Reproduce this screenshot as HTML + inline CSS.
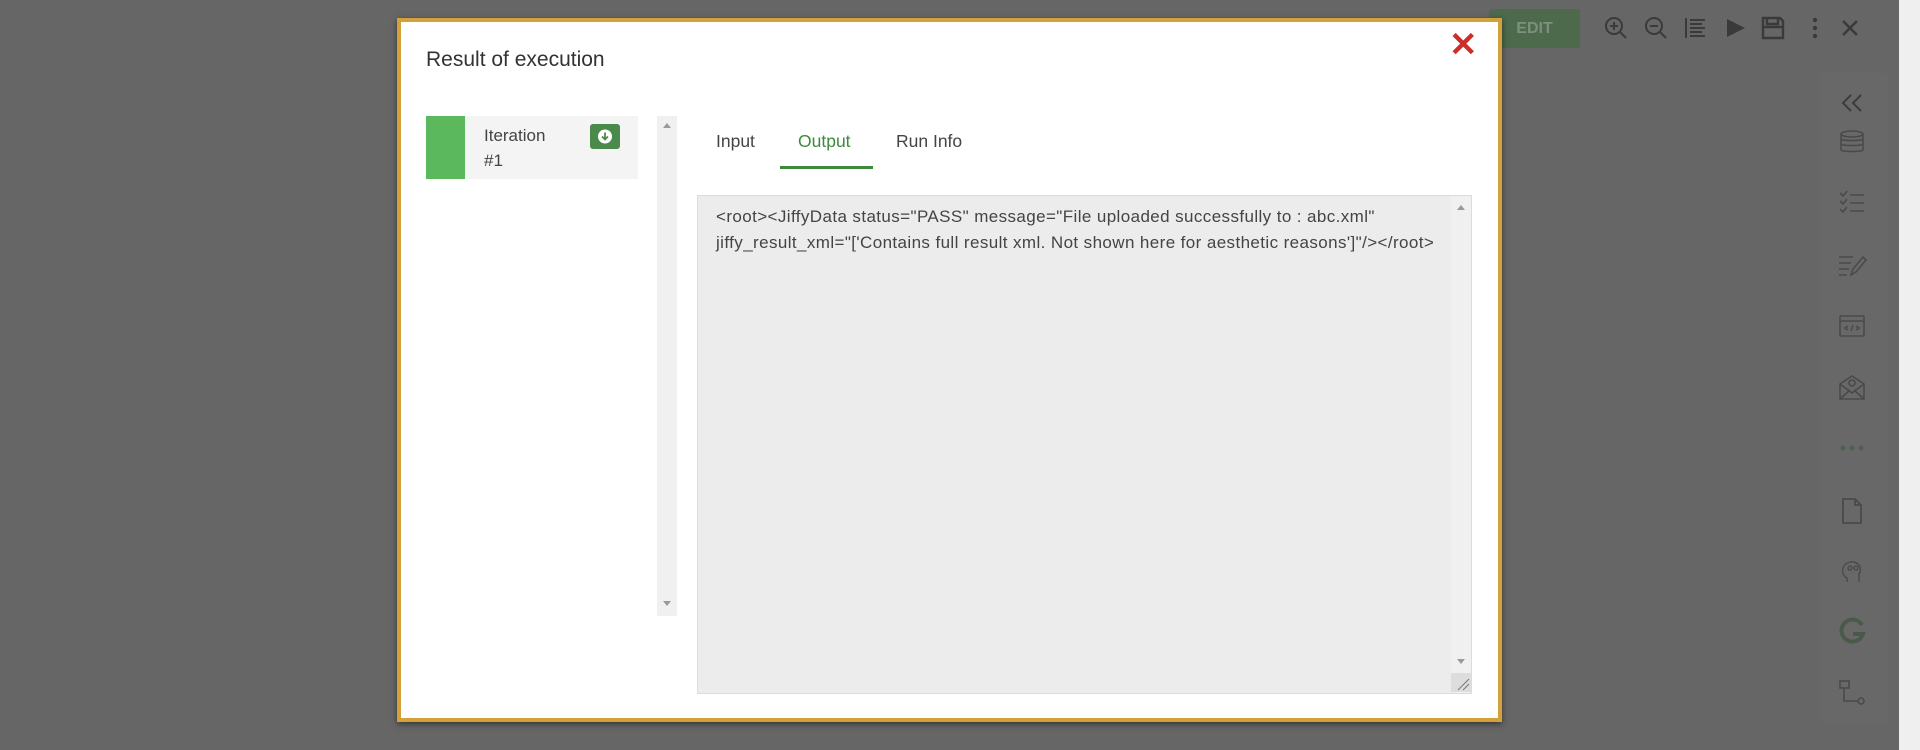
<!DOCTYPE html>
<html><head><style>
body{margin:0;width:1920px;height:750px;background:#666;position:relative;overflow:hidden;font-family:"Liberation Sans",sans-serif}
.a{position:absolute}
.strip{left:1899px;top:0;width:21px;height:750px;background:#efefef}
.edit{left:1489px;top:9px;width:91px;height:39px;background:#4d6a4d;border-radius:3px;color:#7d907d;font-weight:bold;font-size:16px;line-height:39px;text-align:center}
.tb{top:15px;width:26px;height:26px}
.side{left:1820px;top:73px;width:68px;height:650px;background:#686868;border-radius:4px}
.si{left:1837px;width:30px;height:30px}
.modal{left:397px;top:18px;width:1097px;height:696px;background:#fff;border:4px solid #d4a03a;box-shadow:0 2px 6px rgba(0,0,0,.5)}
.title{left:426px;top:48px;font-size:21px;color:#333}
.close{left:1449px;top:28px;color:#c9302c;font-size:34px;font-weight:bold;line-height:34px}
.item{left:426px;top:116px;width:212px;height:63px;background:#f4f4f4}
.bar{left:426px;top:116px;width:39px;height:63px;background:#5cb85c}
.itxt{left:484px;top:123px;font-size:17px;color:#444;line-height:25px}
.dl{left:590px;top:124px;width:30px;height:25px;background:#4a8a4a;border-radius:3px}
.sc{left:657px;top:116px;width:20px;height:500px;background:#f0f0f0}
.tab{top:131px;font-size:17.5px;color:#444}
.tx{left:697px;top:195px;width:773px;height:497px;background:#ececec;border:1px solid #dcdcdc}
.txt{left:716px;top:204px;font-size:17px;color:#444;line-height:26px;white-space:nowrap;letter-spacing:0.4px}
</style></head><body>
<div class="a strip"></div>
<div class="a edit">EDIT</div>
<svg class="a tb" style="left:1603px" viewBox="0 0 26 26" fill="none" stroke="#3a3a3a" stroke-width="2"><circle cx="11" cy="11" r="8"/><path d="M17 17l6 6M11 7v8M7 11h8"/></svg>
<svg class="a tb" style="left:1643px" viewBox="0 0 26 26" fill="none" stroke="#3a3a3a" stroke-width="2"><circle cx="11" cy="11" r="8"/><path d="M17 17l6 6M7 11h8"/></svg>
<svg class="a tb" style="left:1683px" viewBox="0 0 26 26" fill="none" stroke="#3a3a3a" stroke-width="2"><path d="M3 3v20M7 5h15M7 9h12M7 13h15M7 17h12M7 21h15"/></svg>
<svg class="a tb" style="left:1722px" viewBox="0 0 26 26"><path d="M5 4l18 9-18 9z" fill="#3a3a3a"/></svg>
<svg class="a tb" style="left:1760px" viewBox="0 0 26 26" fill="none" stroke="#3a3a3a" stroke-width="2.4"><path d="M3 3h17l3 3v17H3z M7 3v6h11V3 M3 12h20"/></svg>
<svg class="a tb" style="left:1802px" viewBox="0 0 26 26" fill="#3a3a3a"><circle cx="13" cy="5" r="2.2"/><circle cx="13" cy="13" r="2.2"/><circle cx="13" cy="21" r="2.2"/></svg>
<svg class="a tb" style="left:1837px" viewBox="0 0 26 26" stroke="#3a3a3a" stroke-width="2.6"><path d="M6 6l14 14M20 6L6 20"/></svg>
<div class="a side"></div>
<svg class="a si" style="top:88px" viewBox="0 0 30 30" fill="none" stroke="#3d3d3d" stroke-width="2"><path d="M14 7l-8 8 8 8M24 7l-8 8 8 8"/></svg>
<svg class="a si" style="top:127px" viewBox="0 0 30 30" fill="none" stroke="#4a4a4a" stroke-width="1.6"><ellipse cx="15" cy="7" rx="11" ry="3"/><path d="M4 7v16c0 2 22 2 22 0V7M4 12c0 2 22 2 22 0M4 17c0 2 22 2 22 0"/></svg>
<svg class="a si" style="top:187px" viewBox="0 0 30 30" fill="none" stroke="#4a4a4a" stroke-width="1.6"><path d="M3 6l3 3 4-5M3 14l3 3 4-5M3 22l3 3 4-5M13 8h14M13 16h14M13 24h14"/></svg>
<svg class="a si" style="top:249px" viewBox="0 0 30 30" fill="none" stroke="#4a4a4a" stroke-width="1.6"><path d="M2 8h14M2 14h12M2 20h10M2 26h8M14 26l2-6 10-12 3 3-10 12z"/></svg>
<svg class="a si" style="top:311px" viewBox="0 0 30 30" fill="none" stroke="#4a4a4a" stroke-width="1.6"><rect x="3" y="5" width="24" height="20" rx="1"/><path d="M3 10h24M11 15l-3 2 3 2M19 15l3 2-3 2M16 14l-2 6"/></svg>
<svg class="a si" style="top:372px" viewBox="0 0 30 30" fill="none" stroke="#4a4a4a" stroke-width="1.6"><path d="M3 12v15h24V12L15 4zM3 27l10-9M27 27l-10-9M3 12l12 9 12-9"/><circle cx="15" cy="11" r="3"/></svg>
<svg class="a si" style="top:433px" viewBox="0 0 30 30" fill="#4f5f4f"><circle cx="6" cy="15" r="2.5"/><circle cx="15" cy="15" r="2.5"/><circle cx="24" cy="15" r="2.5"/></svg>
<svg class="a si" style="top:496px" viewBox="0 0 30 30" fill="none" stroke="#4a4a4a" stroke-width="1.8"><path d="M6 3h12l6 6v18H6zM18 3v6h6"/></svg>
<svg class="a si" style="top:556px" viewBox="0 0 30 30" fill="none" stroke="#4a4a4a" stroke-width="1.4"><path d="M10 26v-4c-4-2-5-6-4-10 2-6 10-8 15-4 3 3 3 7 1 10v8"/><circle cx="13" cy="12" r="2"/><circle cx="19" cy="12" r="2"/></svg>
<svg class="a si" style="top:617px" viewBox="0 0 30 30" fill="none" stroke="#4a5a4a" stroke-width="4"><path d="M25 8a11 11 0 1 0 1 9H16"/></svg>
<svg class="a si" style="top:678px" viewBox="0 0 30 30" fill="none" stroke="#4a4a4a" stroke-width="1.6"><rect x="3" y="3" width="9" height="7"/><path d="M7 10v13h14"/><circle cx="24" cy="23" r="3"/></svg>

<div class="a modal"></div>
<div class="a title">Result of execution</div>
<div class="a close">✕</div>
<div class="a item"></div>
<div class="a bar"></div>
<div class="a itxt">Iteration<br>#1</div>
<div class="a dl"><svg width="30" height="25" viewBox="0 0 30 25"><circle cx="15" cy="12.5" r="7" fill="#fff"/><path d="M15 8.5v7M12 12.5l3 3 3-3" stroke="#4a8a4a" stroke-width="1.8" fill="none"/></svg></div>
<div class="a sc"></div>
<svg class="a" style="left:662px;top:122px" width="10" height="8"><path d="M1 6l4-5 4 5z" fill="#999"/></svg>
<svg class="a" style="left:662px;top:600px" width="10" height="8"><path d="M1 1l4 5 4-5z" fill="#999"/></svg>
<div class="a tab" style="left:716px">Input</div>
<div class="a tab" style="left:798px;color:#3c8a3c">Output</div>
<div class="a tab" style="left:896px">Run Info</div>
<div class="a" style="left:780px;top:166px;width:93px;height:3px;background:#3c8a3c"></div>
<div class="a tx"></div>
<div class="a" style="left:1451px;top:196px;width:20px;height:497px;background:#f0f0f0"></div>
<svg class="a" style="left:1456px;top:204px" width="10" height="8"><path d="M1 6l4-5 4 5z" fill="#999"/></svg>
<svg class="a" style="left:1456px;top:658px" width="10" height="8"><path d="M1 1l4 5 4-5z" fill="#999"/></svg>
<div class="a" style="left:1451px;top:673px;width:20px;height:19px;background:#ddd"></div>
<svg class="a" style="left:1456px;top:677px" width="14" height="14" stroke="#777"><path d="M2 13L13 2M7 13l6-6"/></svg>
<div class="a txt">&lt;root&gt;&lt;JiffyData status="PASS" message="File uploaded successfully to : abc.xml"<br>jiffy_result_xml="['Contains full result xml. Not shown here for aesthetic reasons']"/&gt;&lt;/root&gt;</div>
</body></html>
